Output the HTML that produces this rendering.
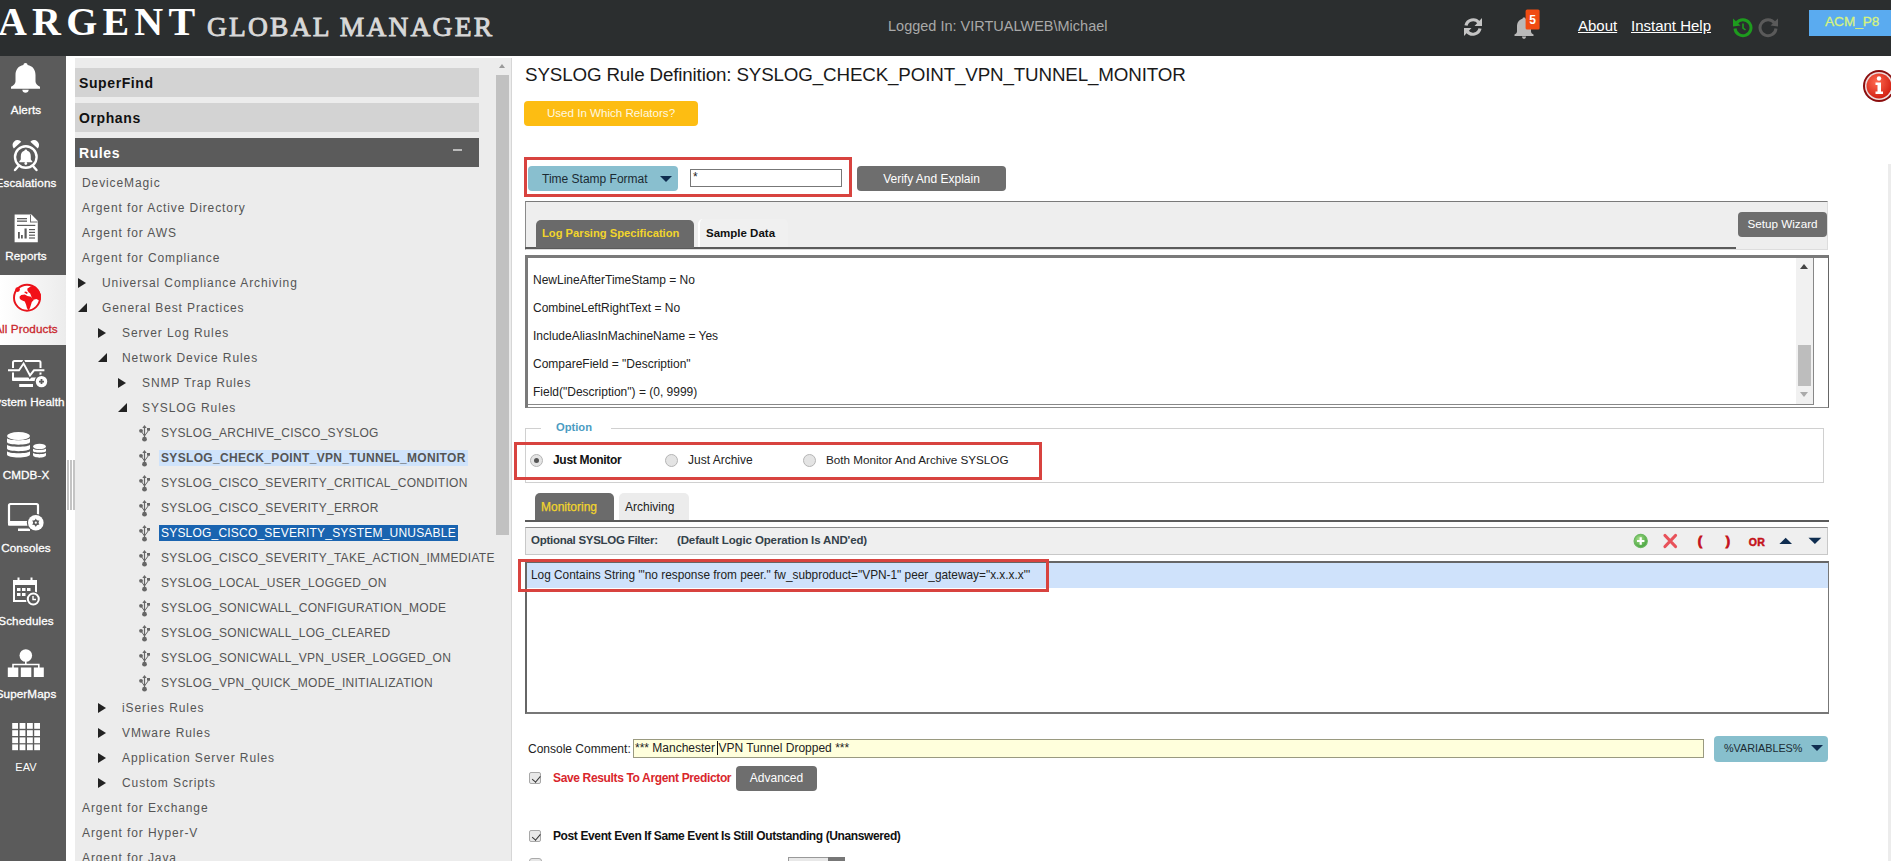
<!DOCTYPE html>
<html><head><meta charset="utf-8">
<style>
*{box-sizing:border-box;margin:0;padding:0}
html,body{width:1891px;height:861px;overflow:hidden;background:#fff;font-family:"Liberation Sans",sans-serif}
body{position:relative}
.a{position:absolute}
#hdr{left:0;top:0;width:1891px;height:56px;background:#2b2e2f}
#logo1{left:-2px;top:-2px;font-family:"Liberation Serif",serif;font-weight:bold;font-size:40px;color:#fff;letter-spacing:5.2px;white-space:nowrap}
#logo2{left:207px;top:11px;font-family:"Liberation Serif",serif;font-weight:normal;-webkit-text-stroke:0.9px #d8d8d8;font-size:27.5px;color:#d8d8d8;letter-spacing:2.2px;white-space:nowrap}
#logged{left:888px;top:18px;font-size:14.5px;color:#a9a9a9;white-space:nowrap}
.hlink{color:#fff;font-size:15px;text-decoration:underline;white-space:nowrap}
#acm{left:1809px;top:10px;width:90px;height:26px;background:#5aabf0;color:#d6f27e;font-size:13.6px;padding:4px 0 0 16px;-webkit-text-stroke:0.3px #d6f27e}
#side{left:0;top:56px;width:66px;height:805px;background:#5b5b5b}
.sl{position:absolute;left:-17px;width:86px;text-align:center;font-size:11.7px;color:#fff;white-space:nowrap;letter-spacing:0.1px;-webkit-text-stroke:0.3px currentColor}
.si{position:absolute}
#panel{left:75px;top:58px;width:437px;height:803px;background:#ececec;overflow:hidden}
.bar{position:absolute;left:0;width:404px;height:29px;background:#d3d3d3;font-size:14px;font-weight:bold;color:#111;padding:7px 0 0 4px;letter-spacing:0.6px}
.ti{position:absolute;font-size:12px;line-height:16px;color:#555;white-space:nowrap;letter-spacing:0.9px}
.ti.up{letter-spacing:0.28px}
.ti.up.sel1{letter-spacing:0.33px}
.ti.up.sel2{letter-spacing:0.2px}
.sel1{font-weight:bold;background:#cfe3fb;padding:0 2px;margin-left:-2px}
.sel2{color:#fff;background:#1a64b0;padding:0 2px;margin-left:-2px}
.arr{position:absolute;width:0;height:0;border-left:8px solid #222;border-top:5px solid transparent;border-bottom:5px solid transparent}
.arro{position:absolute;width:0;height:0;border-right:9px solid #222;border-top:9px solid transparent}
.usb{position:absolute}
.btn{border-radius:4px;text-align:center;white-space:nowrap}
.tab{border-radius:5px 5px 0 0;white-space:nowrap}
.redbox{border:3px solid #d8433f}
.ta{font-size:12px;color:#222;white-space:nowrap}
.radio{width:13px;height:13px;border-radius:50%;background:#e4e4e4;border:1px solid #b5b5b5}
.radio.on::after{content:"";position:absolute;left:3px;top:3px;width:5px;height:5px;border-radius:50%;background:#555}
.chk{width:12px;height:12px;border-radius:2px;background:#e8e8e8;border:1px solid #a8a8a8}
.chk::after{content:"";position:absolute;left:3.5px;top:0.5px;width:3.5px;height:6.5px;border:solid #333;border-width:0 1.7px 1.7px 0;transform:rotate(40deg)}
</style></head><body>
<svg width="0" height="0" style="position:absolute"><defs>
<g id="usb" fill="#666" stroke="#666">
<path d="M5.5 2.5 V15" stroke-width="1.2" fill="none"/>
<path d="M3.3 3 L5.5 0 L7.7 3 Z" stroke="none"/>
<path d="M2 6 L5.5 11 M9.5 5.5 L5.5 11" stroke-width="1" fill="none"/>
<circle cx="2" cy="5.8" r="1.9" stroke="none"/>
<rect x="8" y="3" width="3" height="2.7" stroke="none"/>
<circle cx="5.5" cy="14.2" r="2.4" stroke="none"/>
</g>
</defs></svg>
<div id="hdr" class="a">
  <div id="logo1" class="a">ARGENT</div>
  <div id="logo2" class="a">GLOBAL MANAGER</div>
  <div id="logged" class="a">Logged In: VIRTUALWEB\Michael</div>
  <div class="a hlink" style="left:1578px;top:17px">About</div>
  <div class="a hlink" style="left:1631px;top:17px">Instant Help</div>
  <div id="acm" class="a">ACM_P8</div>
</div>
<div id="side" class="a">
  <div class="a" style="left:0;top:219px;width:66px;height:70px;background:linear-gradient(90deg,#fff,#ececec)"></div>
  <div class="sl" style="top:47px">Alerts</div>
  <div class="sl" style="top:120px">Escalations</div>
  <div class="sl" style="top:193px">Reports</div>
  <div class="sl" style="top:266px;color:#c9262c">All Products</div>
  <div class="sl" style="top:339px">System Health</div>
  <div class="sl" style="top:412px">CMDB-X</div>
  <div class="sl" style="top:485px">Consoles</div>
  <div class="sl" style="top:558px">Schedules</div>
  <div class="sl" style="top:631px">SuperMaps</div>
  <div class="sl" style="top:705px;font-size:11px;-webkit-text-stroke:0">EAV</div>
</div>
<div class="a" style="left:66px;top:56px;width:9px;height:805px;background:#fff"></div>
<div id="panel" class="a">
  <div class="bar" style="top:10px">SuperFind</div>
  <div class="bar" style="top:45px">Orphans</div>
  <div class="bar" style="top:80px;background:#5b5b5b;color:#fff">Rules<div class="a" style="left:378px;top:11px;width:9px;height:2px;background:#bbb"></div></div>
<div class="ti" style="left:7px;top:117px">DeviceMagic</div>
<div class="ti" style="left:7px;top:142px">Argent for Active Directory</div>
<div class="ti" style="left:7px;top:167px">Argent for AWS</div>
<div class="ti" style="left:7px;top:192px">Argent for Compliance</div>
<div class="arr" style="left:3px;top:220px"></div>
<div class="ti" style="left:27px;top:217px">Universal Compliance Archiving</div>
<div class="arro" style="left:3px;top:245px"></div>
<div class="ti" style="left:27px;top:242px">General Best Practices</div>
<div class="arr" style="left:23px;top:270px"></div>
<div class="ti" style="left:47px;top:267px">Server Log Rules</div>
<div class="arro" style="left:23px;top:295px"></div>
<div class="ti" style="left:47px;top:292px">Network Device Rules</div>
<div class="arr" style="left:43px;top:320px"></div>
<div class="ti" style="left:67px;top:317px">SNMP Trap Rules</div>
<div class="arro" style="left:43px;top:345px"></div>
<div class="ti" style="left:67px;top:342px">SYSLOG Rules</div>
<svg class="usb" style="left:64px;top:367px" width="12" height="17" viewBox="0 0 12 17"><use href="#usb"/></svg>
<div class="ti up" style="left:86px;top:367px">SYSLOG_ARCHIVE_CISCO_SYSLOG</div>
<svg class="usb" style="left:64px;top:392px" width="12" height="17" viewBox="0 0 12 17"><use href="#usb"/></svg>
<div class="ti up sel1" style="left:86px;top:392px">SYSLOG_CHECK_POINT_VPN_TUNNEL_MONITOR</div>
<svg class="usb" style="left:64px;top:417px" width="12" height="17" viewBox="0 0 12 17"><use href="#usb"/></svg>
<div class="ti up" style="left:86px;top:417px">SYSLOG_CISCO_SEVERITY_CRITICAL_CONDITION</div>
<svg class="usb" style="left:64px;top:442px" width="12" height="17" viewBox="0 0 12 17"><use href="#usb"/></svg>
<div class="ti up" style="left:86px;top:442px">SYSLOG_CISCO_SEVERITY_ERROR</div>
<svg class="usb" style="left:64px;top:467px" width="12" height="17" viewBox="0 0 12 17"><use href="#usb"/></svg>
<div class="ti up sel2" style="left:86px;top:467px">SYSLOG_CISCO_SEVERITY_SYSTEM_UNUSABLE</div>
<svg class="usb" style="left:64px;top:492px" width="12" height="17" viewBox="0 0 12 17"><use href="#usb"/></svg>
<div class="ti up" style="left:86px;top:492px">SYSLOG_CISCO_SEVERITY_TAKE_ACTION_IMMEDIATE</div>
<svg class="usb" style="left:64px;top:517px" width="12" height="17" viewBox="0 0 12 17"><use href="#usb"/></svg>
<div class="ti up" style="left:86px;top:517px">SYSLOG_LOCAL_USER_LOGGED_ON</div>
<svg class="usb" style="left:64px;top:542px" width="12" height="17" viewBox="0 0 12 17"><use href="#usb"/></svg>
<div class="ti up" style="left:86px;top:542px">SYSLOG_SONICWALL_CONFIGURATION_MODE</div>
<svg class="usb" style="left:64px;top:567px" width="12" height="17" viewBox="0 0 12 17"><use href="#usb"/></svg>
<div class="ti up" style="left:86px;top:567px">SYSLOG_SONICWALL_LOG_CLEARED</div>
<svg class="usb" style="left:64px;top:592px" width="12" height="17" viewBox="0 0 12 17"><use href="#usb"/></svg>
<div class="ti up" style="left:86px;top:592px">SYSLOG_SONICWALL_VPN_USER_LOGGED_ON</div>
<svg class="usb" style="left:64px;top:617px" width="12" height="17" viewBox="0 0 12 17"><use href="#usb"/></svg>
<div class="ti up" style="left:86px;top:617px">SYSLOG_VPN_QUICK_MODE_INITIALIZATION</div>
<div class="arr" style="left:23px;top:645px"></div>
<div class="ti" style="left:47px;top:642px">iSeries Rules</div>
<div class="arr" style="left:23px;top:670px"></div>
<div class="ti" style="left:47px;top:667px">VMware Rules</div>
<div class="arr" style="left:23px;top:695px"></div>
<div class="ti" style="left:47px;top:692px">Application Server Rules</div>
<div class="arr" style="left:23px;top:720px"></div>
<div class="ti" style="left:47px;top:717px">Custom Scripts</div>
<div class="ti" style="left:7px;top:742px">Argent for Exchange</div>
<div class="ti" style="left:7px;top:767px">Argent for Hyper-V</div>
<div class="ti" style="left:7px;top:792px">Argent for Java</div></div>
<!-- tree scrollbar -->
<div class="a" style="left:495px;top:58px;width:16px;height:803px;background:#ececec"></div>
<div class="a" style="left:67px;top:460px;width:1.5px;height:50px;background:#c4c4c4"></div>
<div class="a" style="left:70px;top:460px;width:1.5px;height:50px;background:#c4c4c4"></div>
<div class="a" style="left:73px;top:460px;width:1.5px;height:50px;background:#c4c4c4"></div>
<div class="a" style="left:496px;top:75px;width:13px;height:460px;background:#c1c1c1"></div>
<div class="a" style="left:499px;top:64px;width:0;height:0;border-left:3.5px solid transparent;border-right:3.5px solid transparent;border-bottom:4px solid #999"></div>
<div class="a" style="left:511px;top:58px;width:1px;height:803px;background:#d6d6d6"></div>

<!-- MAIN -->
<div class="a" style="left:525px;top:64px;font-size:18.8px;letter-spacing:-0.15px;color:#1a1a1a;white-space:nowrap">SYSLOG Rule Definition: SYSLOG_CHECK_POINT_VPN_TUNNEL_MONITOR</div>
<div class="a btn" style="left:524px;top:101px;width:174px;height:25px;background:#fdbd12;color:#fff8e0;font-size:11.6px;padding-top:5px">Used In Which Relators?</div>

<div class="a redbox" style="left:524px;top:157px;width:328px;height:40px"></div>
<div class="a btn" style="left:528px;top:166px;width:150px;height:25px;background:#89bfcf;color:#1b2b33;font-size:12px;text-align:left;padding:6px 0 0 14px">Time Stamp Format</div>
<div class="a" style="left:660px;top:176px;width:0;height:0;border-left:6px solid transparent;border-right:6px solid transparent;border-top:6px solid #0f2d50"></div>
<div class="a" style="left:690px;top:169px;width:152px;height:18px;border:1px solid #777;background:#fff;font-size:12px;color:#222;padding:0 0 0 2px;line-height:14px">*</div>
<div class="a btn" style="left:857px;top:166px;width:149px;height:25px;background:#6e6e6e;color:#fff;font-size:12px;padding-top:6px">Verify And Explain</div>

<!-- tab panel 1 -->
<div class="a" style="left:525px;top:201px;width:1303px;height:49px;background:#eeeeee;border-top:1px solid #7a7a7a;border-left:1px solid #8a8a8a;border-right:1px solid #ddd;border-bottom:1px solid #ddd"></div>
<div class="a" style="left:525px;top:247px;width:1211px;height:2px;background:#5b5b5b"></div>
<div class="a tab" style="left:536px;top:220px;width:158px;height:28px;background:#6a6a6a;color:#f2d52c;font-weight:bold;font-size:11.2px;padding:7px 0 0 6px">Log Parsing Specification</div>
<div class="a tab" style="left:698px;top:219px;width:90px;height:28px;background:#f0f0f0;color:#111;font-weight:bold;font-size:11.5px;padding:8px 0 0 6px;border-left:2px solid #fff">Sample Data</div>
<div class="a btn" style="left:1738px;top:212px;width:89px;height:25px;background:#6e6e6e;color:#fff;font-size:11.7px;padding-top:5px">Setup Wizard</div>

<!-- textarea -->
<div class="a" style="left:525px;top:255px;width:1304px;height:153px;border-top:3px solid #7a7a7a;border-left:3px solid #7a7a7a;border-right:1px solid #666;border-bottom:1px solid #888;background:#fff"></div>
<div class="a" style="left:528px;top:258px;width:1286px;height:147px;border-right:1px solid #888;border-bottom:1px solid #888"></div>
<div class="a" style="left:1796px;top:258px;width:17px;height:146px;background:#f1f1f1"></div>
<div class="a" style="left:1800px;top:264px;width:0;height:0;border-left:4.5px solid transparent;border-right:4.5px solid transparent;border-bottom:5px solid #444"></div>
<div class="a" style="left:1798px;top:345px;width:13px;height:41px;background:#bdbdbd"></div>
<div class="a" style="left:1800px;top:392px;width:0;height:0;border-left:4.5px solid transparent;border-right:4.5px solid transparent;border-top:5px solid #aaa"></div>
<div class="a ta" style="left:533px;top:273px">NewLineAfterTimeStamp = No</div>
<div class="a ta" style="left:533px;top:301px">CombineLeftRightText = No</div>
<div class="a ta" style="left:533px;top:329px">IncludeAliasInMachineName = Yes</div>
<div class="a ta" style="left:533px;top:357px">CompareField = "Description"</div>
<div class="a ta" style="left:533px;top:385px">Field("Description") = (0, 9999)</div>

<!-- option fieldset -->
<div class="a" style="left:525px;top:428px;width:1299px;height:55px;border:1px solid #d0d0d0"></div>
<div class="a" style="left:541px;top:420px;width:70px;height:14px;background:#fff"></div>
<div class="a" style="left:556px;top:421px;font-size:11.2px;font-weight:bold;color:#4b9cc2">Option</div>
<div class="a redbox" style="left:514px;top:442px;width:528px;height:38px"></div>
<div class="a radio on" style="left:530px;top:454px"></div>
<div class="a" style="left:553px;top:453px;font-size:12px;font-weight:bold;color:#111;letter-spacing:-0.3px">Just Monitor</div>
<div class="a radio" style="left:665px;top:454px"></div>
<div class="a" style="left:688px;top:453px;font-size:12px;color:#222">Just Archive</div>
<div class="a radio" style="left:803px;top:454px"></div>
<div class="a" style="left:826px;top:453px;font-size:11.7px;color:#222">Both Monitor And Archive SYSLOG</div>

<!-- tabs 2 -->
<div class="a" style="left:525px;top:520px;width:1304px;height:2px;background:#5b5b5b"></div>
<div class="a tab" style="left:535px;top:493px;width:79px;height:27px;background:#6b6b6b;color:#f2d52c;font-size:12px;padding:7px 0 0 6px;-webkit-text-stroke:0.25px #f2d52c">Monitoring</div>
<div class="a tab" style="left:619px;top:493px;width:70px;height:27px;background:#ececec;color:#222;font-size:12px;padding:7px 0 0 6px">Archiving</div>

<!-- filter header -->
<div class="a" style="left:525px;top:527px;width:1303px;height:28px;background:#efefef;border:1px solid #c8c8c8;border-top-color:#8a8a8a"></div>
<div class="a" style="left:531px;top:534px;font-size:11.5px;letter-spacing:-0.27px;font-weight:bold;color:#34414a;white-space:nowrap">Optional SYSLOG Filter:</div>
<div class="a" style="left:677px;top:534px;font-size:11.5px;letter-spacing:-0.13px;font-weight:bold;color:#34414a;white-space:nowrap">(Default Logic Operation Is AND'ed)</div>

<!-- filter toolbar icons -->
<svg class="a" style="left:1630px;top:530px" width="200" height="22" viewBox="1630 530 200 22">
<defs><radialGradient id="gg" cx="0.4" cy="0.35" r="0.7"><stop offset="0" stop-color="#a8e08a"/><stop offset="1" stop-color="#3f9e3a"/></radialGradient></defs>
<circle cx="1640.7" cy="541" r="6.6" fill="url(#gg)" stroke="#6cb860" stroke-width="1.2"/>
<path d="M1637 541 H1644.4 M1640.7 537.3 V544.7" stroke="#fff" stroke-width="2.2"/>
<path d="M1665 535.5 L1675.5 546.5 M1675.5 535.5 L1665 546.5" stroke="#e8525a" stroke-width="3.2" stroke-linecap="round"/>
<text x="1700" y="545" font-family="Liberation Sans" font-weight="bold" font-size="13" fill="#c4121a" stroke="#c4121a" stroke-width="0.8" text-anchor="middle">(</text>
<text x="1728" y="545" font-family="Liberation Sans" font-weight="bold" font-size="13" fill="#c4121a" stroke="#c4121a" stroke-width="0.8" text-anchor="middle">)</text>
<text x="1757" y="545.5" font-family="Liberation Sans" font-weight="bold" font-size="10.5" fill="#c4121a" stroke="#c4121a" stroke-width="0.5" text-anchor="middle" letter-spacing="0.3">OR</text>
<path d="M1779.4 544 L1785.7 537.8 L1792 544 Z" fill="#0f2d50"/>
<path d="M1808.5 537.8 L1821.3 537.8 L1814.9 544 Z" fill="#0f2d50"/>
</svg>
<!-- filter list -->
<div class="a" style="left:525px;top:561px;width:1304px;height:153px;border-top:2px solid #666;border-left:2px solid #666;border-right:1px solid #777;border-bottom:2px solid #777;background:#fff"></div>
<div class="a" style="left:527px;top:563px;width:1301px;height:25px;background:#cfe2fb"></div>
<div class="a redbox" style="left:518px;top:559px;width:531px;height:33px"></div>
<div class="a" style="left:531px;top:568px;font-size:11.85px;color:#222;white-space:nowrap">Log Contains String '"no response from peer." fw_subproduct="VPN-1" peer_gateway="x.x.x.x"'</div>

<!-- console comment -->
<div class="a" style="left:528px;top:742px;font-size:12px;color:#222;white-space:nowrap">Console Comment:</div>
<div class="a" style="left:633px;top:739px;width:1071px;height:19px;background:#ffffdc;border:1px solid #9a9a80;font-size:12px;color:#222;padding:1px 0 0 1px;white-space:nowrap">*** Manchester <span style="border-left:1px solid #111;margin-left:-1px">VPN</span> Tunnel Dropped ***</div>
<div class="a btn" style="left:1714px;top:736px;width:114px;height:26px;background:#87bfcd;color:#1b2b33;font-size:10.8px;text-align:left;padding:6px 0 0 10px">%VARIABLES%</div>
<div class="a" style="left:1811px;top:745px;width:0;height:0;border-left:6px solid transparent;border-right:6px solid transparent;border-top:6px solid #0f2d50"></div>

<div class="a chk" style="left:529px;top:772px"></div>
<div class="a" style="left:553px;top:771px;font-size:12px;font-weight:bold;color:#d9262c;white-space:nowrap;letter-spacing:-0.35px">Save Results To Argent Predictor</div>
<div class="a btn" style="left:736px;top:766px;width:81px;height:25px;background:#6e6e6e;color:#fff;font-size:12px;padding-top:5px">Advanced</div>

<div class="a chk" style="left:529px;top:830px"></div>
<div class="a" style="left:553px;top:829px;font-size:12px;font-weight:bold;color:#111;white-space:nowrap;letter-spacing:-0.38px">Post Event Even If Same Event Is Still Outstanding (Unanswered)</div>
<div class="a" style="left:529px;top:858px;width:13px;height:13px;border-radius:3px;background:#e6e6e6;border:1px solid #aaa"></div>
<div class="a" style="left:788px;top:857px;width:57px;height:10px;background:#e8e8e8;border:1px solid #999"></div>
<div class="a" style="left:828px;top:857px;width:17px;height:10px;background:#777"></div>

<!-- right scrollbar strip & info icon -->
<div class="a" style="left:1888px;top:164px;width:3px;height:697px;background:#ececec"></div>
<svg class="a" style="left:1862px;top:69px" width="34" height="34" viewBox="0 0 34 34">
<defs><radialGradient id="ig" cx="0.4" cy="0.35" r="0.7"><stop offset="0" stop-color="#ff6a50"/><stop offset="1" stop-color="#d01c10"/></radialGradient></defs>
<circle cx="17" cy="17" r="16" fill="#8b0e0e"/>
<circle cx="17" cy="17" r="14" fill="#fff" opacity="0.85"/>
<circle cx="17" cy="17" r="12.5" fill="url(#ig)"/>
<circle cx="17" cy="9.5" r="2.2" fill="#fff"/>
<path d="M13.5 13.5 H19 V22.5 H21 V25 H13.5 V22.5 H15.5 V16 H13.5 Z" fill="#fff"/>
</svg>
<svg class="a" style="left:0;top:0" width="66" height="861" viewBox="0 0 66 861">
<g fill="#fff">
<!-- Alerts bell -->
<path d="M25.5 63 C26.8 63 27.5 63.8 27.6 65 C32.5 65.8 35.5 69.5 35.5 75 L35.5 81.5 C35.5 83.5 37.5 85.5 40 86.8 L40 88.8 L11 88.8 L11 86.8 C13.5 85.5 15.5 83.5 15.5 81.5 L15.5 75 C15.5 69.5 18.5 65.8 23.4 65 C23.5 63.8 24.2 63 25.5 63 Z"/>
<path d="M22.3 89.8 L28.7 89.8 C28.7 91.8 27.2 92.8 25.5 92.8 C23.8 92.8 22.3 91.8 22.3 89.8Z"/>
<!-- Escalations alarm clock -->
<circle cx="25.8" cy="157" r="10.8" fill="none" stroke="#fff" stroke-width="2.4"/>
<path transform="translate(17,144.5) rotate(-42)" d="M-5 0.8 A5 5 0 0 1 5 0.8 Z"/>
<path transform="translate(34.6,144.5) rotate(42)" d="M-5 0.8 A5 5 0 0 1 5 0.8 Z"/>
<path d="M18.5 166 L15 170 M33 166 L36.5 170" stroke="#fff" stroke-width="2.4" stroke-linecap="round"/>
<path d="M25.8 149.5 C26.8 149.5 27.2 150.2 27.2 150.8 C29.8 151.5 30.8 153.8 30.8 156.5 L30.8 159 C30.8 160 31.8 160.8 32.3 161.2 L32.3 162.2 L19.3 162.2 L19.3 161.2 C19.8 160.8 20.8 160 20.8 159 L20.8 156.5 C20.8 153.8 21.8 151.5 24.4 150.8 C24.4 150.2 24.8 149.5 25.8 149.5Z"/>
<circle cx="25.8" cy="163.5" r="1.4"/>
<!-- Reports doc -->
<path d="M14.6 214.6 L31.5 214.6 L37.8 221 L37.8 242.3 L14.6 242.3 Z"/>
<g fill="#5b5b5b">
<path d="M31 215 L31 221.5 L37.5 221.5 L37.5 222.5 L30 222.5 L30 215Z" opacity="0.9"/>
<rect x="17" y="218" width="10" height="1.3"/>
<rect x="17" y="220.5" width="10" height="1.3"/>
<rect x="17" y="224.8" width="18.3" height="1.2"/>
<rect x="18" y="232" width="1.8" height="6.5"/>
<rect x="21" y="235" width="1.8" height="3.5"/>
<rect x="24.5" y="228.5" width="2.2" height="10"/>
<rect x="29" y="229" width="6" height="1.2"/>
<rect x="29" y="231.8" width="6" height="1.2"/>
<rect x="29" y="234.6" width="6" height="1.2"/>
<rect x="29" y="237.4" width="6" height="1.2"/>
</g>
<!-- System Health -->
<rect x="13" y="361" width="27.5" height="19" rx="1.5" fill="none" stroke="#fff" stroke-width="2"/>
<rect x="12" y="377.5" width="29.5" height="3.5" rx="1"/>
<path d="M8 370.3 H19 L23.6 363.5 L30 375.4 L34 370.3 H44.4" fill="none" stroke="#5b5b5b" stroke-width="4.5"/>
<path d="M8 370.3 H19 L23.6 363.5 L30 375.4 L34 370.3 H44.4" fill="none" stroke="#fff" stroke-width="1.9" stroke-linejoin="miter"/>
<rect x="19.2" y="384" width="13.8" height="3"/>
<circle cx="41.5" cy="381.6" r="7" fill="#5b5b5b"/>
<circle cx="41.5" cy="381.6" r="5.7"/>
<path d="M39 381.6 H44 M41.5 379.1 V384.1" stroke="#5b5b5b" stroke-width="1.8"/>
<!-- CMDB-X -->
<ellipse cx="18.5" cy="436" rx="11.5" ry="4"/>
<path d="M7 438 C7 441 30 441 30 438 L30 442 C30 445.5 7 445.5 7 442Z"/>
<path d="M7 444.5 C7 447.5 30 447.5 30 444.5 L30 448.5 C30 452 7 452 7 448.5Z"/>
<path d="M7 451 C7 454 30 454 30 451 L30 454.5 C30 458.5 7 458.5 7 454.5Z"/>
<ellipse cx="39.5" cy="446.5" rx="6.5" ry="2.8"/>
<path d="M33 448.3 C33 450.5 46 450.5 46 448.3 L46 451 C46 453 33 453 33 451Z"/>
<path d="M33 452.5 C33 454.7 46 454.7 46 452.5 L46 455 C46 458.5 33 458.5 33 455Z"/>
<!-- Consoles -->
<rect x="9" y="504" width="29" height="20.5" rx="1.5" fill="none" stroke="#fff" stroke-width="2.2"/>
<rect x="8" y="521" width="31" height="4.5"/>
<rect x="18" y="528.5" width="12" height="2.5"/>
<circle cx="35.8" cy="522.7" r="9" fill="#5b5b5b"/>
<circle cx="35.8" cy="522.7" r="7.8"/>
<path d="M35.80 518.50 L39.44 524.80 L32.16 524.80Z M35.80 526.90 L32.16 520.60 L39.44 520.60Z" fill="#5b5b5b"/>
<circle cx="35.8" cy="522.7" r="2.6" fill="#5b5b5b"/>
<circle cx="35.8" cy="522.7" r="1.1"/>
<!-- Schedules -->
<path d="M14 581 H36 V601 H14 Z" fill="none" stroke="#fff" stroke-width="2"/>
<rect x="14" y="580.5" width="22" height="4.5"/>
<rect x="17.5" y="577.5" width="2" height="5"/>
<rect x="30.5" y="577.5" width="2" height="5"/>
<rect x="17" y="588" width="3.5" height="3"/><rect x="22" y="588" width="3.5" height="3"/><rect x="27" y="588" width="3.5" height="3"/>
<rect x="17" y="593" width="3.5" height="3"/><rect x="22" y="593" width="3.5" height="3"/>
<circle cx="33.3" cy="599" r="7.5" fill="#5b5b5b"/>
<circle cx="33.3" cy="599" r="5.5" fill="none" stroke="#fff" stroke-width="2"/>
<path d="M33 596 V599.5 H36" fill="none" stroke="#fff" stroke-width="1.4"/>
<!-- SuperMaps -->
<circle cx="25.8" cy="655.5" r="6.3"/>
<path d="M25.8 660 V665 M13 668 V664.5 H38.8 V668" fill="none" stroke="#fff" stroke-width="1.6"/>
<rect x="7.8" y="667.5" width="10.5" height="9.5"/>
<rect x="20.8" y="667.5" width="10.5" height="9.5"/>
<rect x="33.8" y="667.5" width="10" height="9.5"/>
<!-- EAV -->
<g>
<rect x="12.2" y="723" width="5.8" height="5.8"/><rect x="19.6" y="723" width="5.8" height="5.8"/><rect x="27" y="723" width="5.8" height="5.8"/><rect x="34.2" y="723" width="5.8" height="5.8"/>
<rect x="12.2" y="730.2" width="5.8" height="5.8"/><rect x="19.6" y="730.2" width="5.8" height="5.8"/><rect x="27" y="730.2" width="5.8" height="5.8"/><rect x="34.2" y="730.2" width="5.8" height="5.8"/>
<rect x="12.2" y="737.4" width="5.8" height="5.8"/><rect x="19.6" y="737.4" width="5.8" height="5.8"/><rect x="27" y="737.4" width="5.8" height="5.8"/><rect x="34.2" y="737.4" width="5.8" height="5.8"/>
<rect x="12.2" y="744.4" width="5.8" height="5.8"/><rect x="19.6" y="744.4" width="5.8" height="5.8"/><rect x="27" y="744.4" width="5.8" height="5.8"/><rect x="34.2" y="744.4" width="5.8" height="5.8"/>
</g>
</g>
<!-- Globe -->
<g transform="translate(8,280)">
<circle cx="19" cy="17.7" r="13" fill="#fff" stroke="#e8141c" stroke-width="1.9"/>
<path fill="#f21018" d="M19.4 8.4 L23 6.2 L27.4 6.6 L30.9 10.2 L32.9 14.6 L32.7 19.9 L30.9 20.3 L28.3 19 L24.7 19.9 L23.8 17.7 L23 15.5 L22.1 13.2 L20.8 12.4 L19.4 10.6 Z"/>
<path fill="#f21018" d="M11.5 16.8 L13.2 15 L16.8 14.6 L19.4 15.9 L23 16.8 L24.7 19 L25.6 20.3 L23.8 22.1 L23 24.7 L22.1 27.4 L20.8 30.5 L19 28.3 L18.1 24.7 L16.8 21.6 L13.7 20.3 L11.9 19 Z"/>
<circle cx="9.6" cy="9.6" r="2.3" fill="#f21018"/>
<path fill="#f21018" d="M16 12 L18 11.5 L20 13 L18.5 14 Z"/>
</g>
</svg>
<!-- header icons -->
<svg class="a" style="left:1462px;top:16px" width="22" height="22" viewBox="0 0 22 22">
<path d="M4 9.5 A7.3 7.3 0 0 1 16.8 6.5" fill="none" stroke="#c4c4c4" stroke-width="3.2"/>
<path d="M20 2 L20 10 L12.5 10 Z" fill="#c4c4c4"/>
<path d="M18 12.5 A7.3 7.3 0 0 1 5.2 15.5" fill="none" stroke="#c4c4c4" stroke-width="3.2"/>
<path d="M2 20 L2 12 L9.5 12 Z" fill="#c4c4c4"/>
</svg>
<svg class="a" style="left:1512px;top:8px" width="30" height="31" viewBox="0 0 30 31">
<path fill="#b9b9b9" d="M12 9.5 C13 9.5 13.5 10 13.5 10.8 C17.5 11.8 19 15 19 19 L19 23.5 C19 25 20.5 26 21.5 26.5 L21.5 28 L2.5 28 L2.5 26.5 C3.5 26 5 25 5 23.5 L5 19 C5 15 6.5 11.8 10.5 10.8 C10.5 10 11 9.5 12 9.5Z"/>
<path fill="#b9b9b9" d="M10 28.5 H14 C14 30 13 30.8 12 30.8 C11 30.8 10 30 10 28.5Z"/>
<rect x="13.6" y="1.4" width="14" height="20" rx="1.5" fill="#f04c12"/>
<text x="20.6" y="16" font-family="Liberation Sans" font-weight="bold" font-size="12" fill="#fff" text-anchor="middle">5</text>
</svg>
<svg class="a" style="left:1731px;top:16px" width="50" height="22" viewBox="0 0 50 22">
<path d="M5.5 7 A8 8 0 1 1 4 12.5" fill="none" stroke="#1e9b1e" stroke-width="3"/>
<path d="M2 2.5 L9.5 9.5 L2 10.5 Z" fill="#1e9b1e"/>
<path d="M12 7.5 V12 L14.5 14" fill="none" stroke="#1e9b1e" stroke-width="1.6"/>
<path d="M43.5 7 A8 8 0 1 0 45 12.5" fill="none" stroke="#5a5a5a" stroke-width="3"/>
<path d="M47 2.5 L39.5 9.5 L47 10.5 Z" fill="#5a5a5a"/>
</svg>

</body></html>
